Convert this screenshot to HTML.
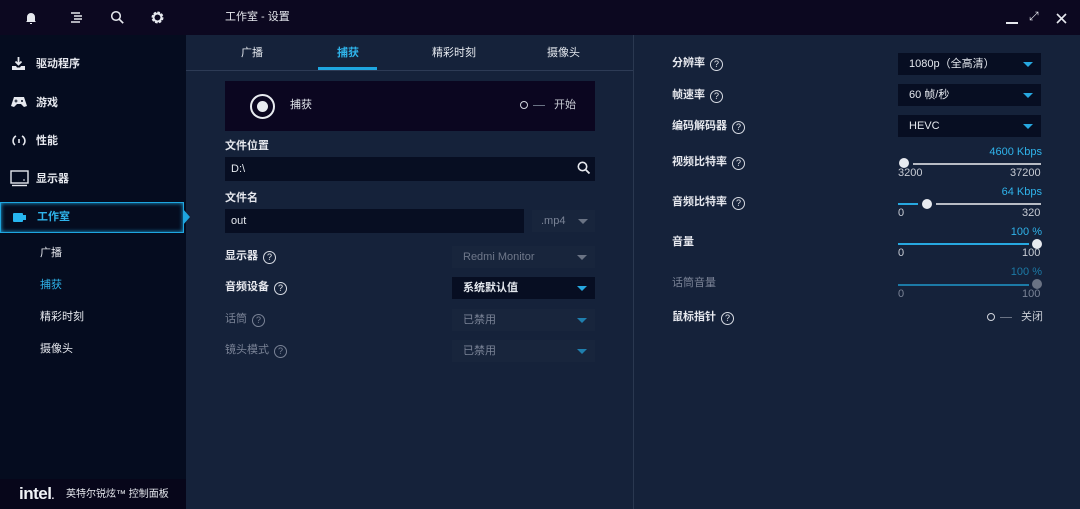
<!DOCTYPE html>
<html><head><meta charset="utf-8"><style>
*{margin:0;padding:0;box-sizing:border-box}
body{width:1080px;height:509px;overflow:hidden;background:#15223a;font-family:"Liberation Sans","Noto Sans CJK SC",sans-serif;color:#e4e8ee;font-size:11px;line-height:13px;position:relative}
.a{position:absolute}
.top{left:0;top:0;width:1080px;height:35px;background:#0c0820}
.side{left:0;top:35px;width:186px;height:474px;background:#050c1f}
.foot{left:0;top:479px;width:186px;height:30px;background:#07061a}
.nav{left:12px;font-size:11px;font-weight:bold;color:#e6e8ee}
.sub{left:40px;font-size:11px;color:#e6e8ee}
.box{background:#070e22}
.lbl{font-size:11px;font-weight:bold;color:#e6e8ee}
.dim{color:#7a8396}
.q{display:inline-block;width:13px;height:13px;border:1.3px solid #d8dce4;border-radius:50%;font-size:9px;text-align:center;line-height:11px;margin-left:5px;vertical-align:-1px;font-weight:normal}
.dim .q{border-color:#7a8396}
.tri{position:absolute;right:8px;top:9px;width:0;height:0;border-left:5px solid transparent;border-right:5px solid transparent;border-top:5px solid #27a8e0}
.dd{position:absolute;height:22px;line-height:22px;padding-left:11px;font-size:11px}
.tk{height:2px;background:#b8bcc4}
.blue{color:#2fb3ea}
.knob{width:10px;height:10px;border-radius:50%;background:#e8ebf0}
</style></head><body>
<div class="a top"></div>
<div class="a side"></div>
<div class="a foot"></div>
<svg class="a" style="left:24px;top:11px" width="14" height="14" viewBox="0 0 14 14"><path d="M3 10V6a4 4 0 0 1 8 0v4l1 1H2z M6 12h2v1H6z" fill="#e6e8ee"/></svg>
<svg class="a" style="left:70px;top:11px" width="14" height="14" viewBox="0 0 14 14"><path d="M1 2h9M4 5h8M4 8h8M1 11h9" stroke="#e6e8ee" stroke-width="1.6"/></svg>
<svg class="a" style="left:110px;top:10px" width="15" height="15" viewBox="0 0 15 15"><circle cx="6" cy="6" r="4.3" stroke="#e6e8ee" stroke-width="1.5" fill="none"/><path d="M9.2 9.2l4 4" stroke="#e6e8ee" stroke-width="1.7"/></svg>
<svg class="a" style="left:150px;top:10px" width="15" height="15" viewBox="0 0 15 15"><circle cx="7.5" cy="7.5" r="4.5" fill="none" stroke="#e6e8ee" stroke-width="3" stroke-dasharray="2.2 1.3"/><circle cx="7.5" cy="7.5" r="4" fill="none" stroke="#e6e8ee" stroke-width="2"/><circle cx="7.5" cy="7.5" r="1.5" fill="#0c0820"/></svg>
<div class="a" style="left:225px;top:11px;font-size:11px;color:#e6e8ee">工作室 - 设置</div>
<div class="a" style="left:1006px;top:22px;width:12px;height:1.5px;background:#e6e8ee"></div>
<div class="a" style="left:1029px;top:10px;font-size:12px;color:#e6e8ee">⤢</div>
<svg class="a" style="left:1056px;top:13px" width="11" height="11" viewBox="0 0 11 11"><path d="M1 1l9 9M10 1l-9 9" stroke="#e6e8ee" stroke-width="1.6"/></svg>
<svg class="a" style="left:11px;top:57px" width="15" height="14" viewBox="0 0 15 14"><path d="M7.5 0v7M4.5 4.5l3 3 3-3" stroke="#e6e8ee" stroke-width="1.8" fill="none"/><path d="M1 9h4l1 1.5h3L10 9h4v4H1z" fill="#e6e8ee"/></svg>
<div class="a nav" style="left:36px;top:58px">驱动程序</div>
<svg class="a" style="left:11px;top:96px" width="16" height="12" viewBox="0 0 16 12"><path d="M3 1h10l3 9-3 1-3-3H6l-3 3-3-1z" fill="#e6e8ee"/><circle cx="11" cy="5" r="1" fill="#040b1c"/><path d="M3.5 5h3M5 3.5v3" stroke="#040b1c" stroke-width="1"/></svg>
<div class="a nav" style="left:36px;top:97px">游戏</div>
<svg class="a" style="left:12px;top:134px" width="14" height="13" viewBox="0 0 14 13"><path d="M3 11A5.5 5.5 0 0 1 4 2M10 2a5.5 5.5 0 0 1 1 9" stroke="#e6e8ee" stroke-width="1.6" fill="none"/><path d="M7 5v4" stroke="#e6e8ee" stroke-width="1.6"/></svg>
<div class="a nav" style="left:36px;top:135px">性能</div>
<svg class="a" style="left:10px;top:170px" width="19" height="17" viewBox="0 0 19 17"><rect x="1" y="1" width="17" height="12" stroke="#e6e8ee" stroke-width="1.4" fill="none"/><path d="M2 15.5h15" stroke="#e6e8ee" stroke-width="1.4"/><path d="M13 10h2" stroke="#e6e8ee"/></svg>
<div class="a nav" style="left:36px;top:173px">显示器</div>
<div class="a" style="left:0;top:202px;width:184px;height:31px;border:1px solid #1ea6e0;box-shadow:0 0 4px #1ea6e0 inset"></div>
<div class="a" style="left:183px;top:209px;width:0;height:0;border-top:8px solid transparent;border-bottom:8px solid transparent;border-left:7px solid #1ea6e0"></div>
<div class="a" style="left:13px;top:213px;width:10px;height:9px;background:#27b6f0;border-radius:1px"></div>
<div class="a" style="left:23px;top:215px;width:3px;height:5px;background:#27b6f0"></div>
<div class="a nav" style="left:37px;top:211px;color:#2fb3ea">工作室</div>
<div class="a sub" style="top:247px">广播</div>
<div class="a sub blue" style="top:279px">捕获</div>
<div class="a sub" style="top:311px">精彩时刻</div>
<div class="a sub" style="top:343px">摄像头</div>
<div class="a" style="left:19px;top:484px;font-size:17px;line-height:20px;font-weight:bold;color:#f0f2f6;letter-spacing:-0.5px">intel<span style="font-size:10px">.</span></div>
<div class="a" style="left:66px;top:488px;font-size:10px;color:#e6e8ee">英特尔锐炫™ 控制面板</div>
<div class="a" style="left:633px;top:35px;width:1px;height:474px;background:#2a3850"></div>
<div class="a" style="left:186px;top:70px;width:447px;height:1px;background:#2d3b55"></div>
<div class="a" style="left:241px;top:47px">广播</div>
<div class="a blue" style="left:337px;top:47px;font-weight:bold">捕获</div>
<div class="a" style="left:318px;top:67px;width:59px;height:3px;background:#1ea6e0"></div>
<div class="a" style="left:432px;top:47px">精彩时刻</div>
<div class="a" style="left:547px;top:47px">摄像头</div>
<div class="a" style="left:225px;top:81px;width:370px;height:50px;background:#0b0620"></div>
<div class="a" style="left:250px;top:94px;width:25px;height:25px;border:2.5px solid #e8ebf0;border-radius:50%"></div>
<div class="a" style="left:257px;top:101px;width:11px;height:11px;background:#e8ebf0;border-radius:50%"></div>
<div class="a" style="left:290px;top:99px">捕获</div>
<div class="a" style="left:520px;top:101px;width:8px;height:8px;border:1.5px solid #d0d4dc;border-radius:50%"></div>
<div class="a" style="left:533px;top:105px;width:12px;height:1px;background:#6a7384"></div>
<div class="a" style="left:554px;top:99px;color:#c8ccd4">开始</div>
<div class="a lbl" style="left:225px;top:140px">文件位置</div>
<div class="a box" style="left:225px;top:157px;width:370px;height:24px"></div>
<div class="a" style="left:231px;top:163px">D:\</div>
<svg class="a" style="left:577px;top:161px" width="14" height="14" viewBox="0 0 14 14"><circle cx="5.5" cy="5.5" r="4.2" stroke="#e6e8ee" stroke-width="1.6" fill="none"/><path d="M8.5 8.5l4 4" stroke="#e6e8ee" stroke-width="1.8"/></svg>
<div class="a lbl" style="left:225px;top:192px">文件名</div>
<div class="a box" style="left:225px;top:209px;width:299px;height:24px"></div>
<div class="a" style="left:231px;top:215px">out</div>
<div class="a" style="left:532px;top:210px;width:63px;height:22px;background:#18253c"></div>
<div class="a dim" style="left:541px;top:215px">.mp4</div>
<div class="a" style="left:578px;top:219px;border-left:5px solid transparent;border-right:5px solid transparent;border-top:5px solid #6a7384"></div>
<div class="a lbl" style="left:225px;top:250px">显示器<span class="q">?</span></div>
<div class="a dd" style="left:452px;top:246px;width:143px;background:#18253c;color:#6f788a">Redmi Monitor<div class="tri" style="border-top-color:#6a7384"></div></div>
<div class="a lbl" style="left:225px;top:281px">音频设备<span class="q">?</span></div>
<div class="a dd" style="left:452px;top:277px;width:143px;background:#070e22;font-weight:bold">系统默认值<div class="tri"></div></div>
<div class="a lbl dim" style="left:225px;top:313px;font-weight:normal">话筒<span class="q">?</span></div>
<div class="a dd" style="left:452px;top:309px;width:143px;background:#18253c;color:#7a8396">已禁用<div class="tri" style="border-top-color:#1f7fae"></div></div>
<div class="a lbl dim" style="left:225px;top:344px;font-weight:normal">镜头模式<span class="q">?</span></div>
<div class="a dd" style="left:452px;top:340px;width:143px;background:#18253c;color:#7a8396">已禁用<div class="tri" style="border-top-color:#1f7fae"></div></div>
<div class="a lbl" style="left:672px;top:57px">分辨率<span class="q">?</span></div>
<div class="a dd" style="left:898px;top:53px;width:143px;background:#070e22">1080p（全高清）<div class="tri"></div></div>
<div class="a lbl" style="left:672px;top:89px">帧速率<span class="q">?</span></div>
<div class="a dd" style="left:898px;top:84px;width:143px;background:#070e22">60 帧/秒<div class="tri"></div></div>
<div class="a lbl" style="left:672px;top:120px">编码解码器<span class="q">?</span></div>
<div class="a dd" style="left:898px;top:115px;width:143px;background:#070e22">HEVC<div class="tri"></div></div>
<div class="a lbl" style="left:672px;top:156px">视频比特率<span class="q">?</span></div>
<div class="a blue" style="left:900px;top:146px;width:142px;text-align:right">4600 Kbps</div>
<div class="a tk" style="left:913px;top:163px;width:128px"></div>
<div class="a knob" style="left:899px;top:158px"></div>
<div class="a" style="left:898px;top:167px;color:#c8ccd4">3200</div>
<div class="a" style="left:1010px;top:167px;color:#c8ccd4">37200</div>
<div class="a lbl" style="left:672px;top:196px">音频比特率<span class="q">?</span></div>
<div class="a blue" style="left:900px;top:186px;width:142px;text-align:right">64 Kbps</div>
<div class="a" style="left:898px;top:203px;width:20px;height:2px;background:#27a8e0"></div>
<div class="a tk" style="left:936px;top:203px;width:105px"></div>
<div class="a knob" style="left:922px;top:199px"></div>
<div class="a" style="left:898px;top:207px;color:#c8ccd4">0</div>
<div class="a" style="left:1022px;top:207px;color:#c8ccd4">320</div>
<div class="a lbl" style="left:672px;top:236px">音量</div>
<div class="a blue" style="left:900px;top:226px;width:142px;text-align:right">100 %</div>
<div class="a" style="left:898px;top:243px;width:131px;height:2px;background:#27a8e0"></div>
<div class="a knob" style="left:1032px;top:239px"></div>
<div class="a" style="left:898px;top:247px;color:#c8ccd4">0</div>
<div class="a" style="left:1022px;top:247px;color:#c8ccd4">100</div>
<div class="a dim" style="left:672px;top:277px">话筒音量</div>
<div class="a" style="left:900px;top:266px;width:142px;text-align:right;color:#1c7aa6">100 %</div>
<div class="a" style="left:898px;top:284px;width:131px;height:2px;background:#1c7aa6"></div>
<div class="a knob" style="left:1032px;top:279px;background:#6a7384"></div>
<div class="a dim" style="left:898px;top:288px">0</div>
<div class="a dim" style="left:1022px;top:288px">100</div>
<div class="a lbl" style="left:672px;top:311px">鼠标指针<span class="q">?</span></div>
<div class="a" style="left:987px;top:313px;width:8px;height:8px;border:1.5px solid #d0d4dc;border-radius:50%"></div>
<div class="a" style="left:1000px;top:317px;width:12px;height:1px;background:#6a7384"></div>
<div class="a" style="left:1021px;top:311px;color:#c8ccd4">关闭</div>
</body></html>
